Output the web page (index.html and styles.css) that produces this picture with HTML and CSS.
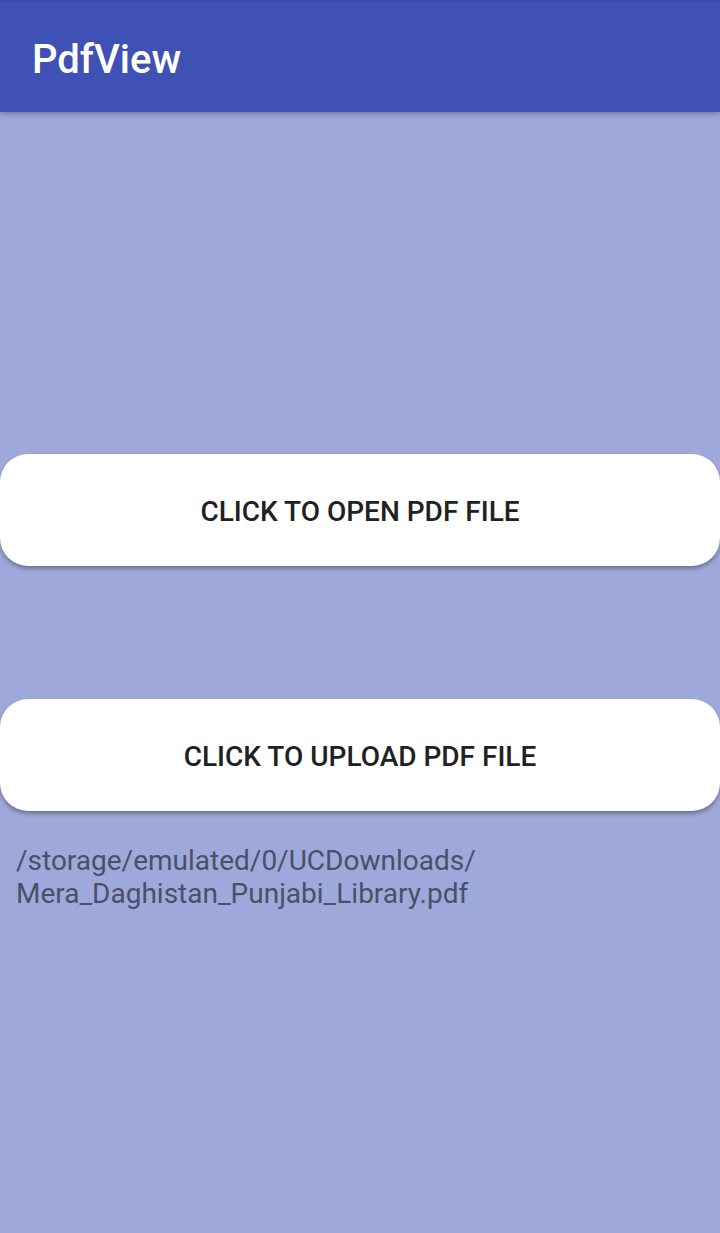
FILE: index.html
```html
<!DOCTYPE html>
<html>
<head>
<meta charset="utf-8">
<link rel="stylesheet" href="styles.css">
</head>
<body>
<div class="app">
  <header class="toolbar"><span class="title">PdfView</span></header>
  <main class="content">
    <button class="btn btn-open">CLICK TO OPEN PDF FILE</button>
    <button class="btn btn-upload">CLICK TO UPLOAD PDF FILE</button>
    <p class="path">/storage/emulated/0/UCDownloads/<br>Mera_Daghistan_Punjabi_Library.pdf</p>
  </main>
</div>
</body>
</html>
```
FILE: styles.css
```css
html, body {
  margin: 0;
  padding: 0;
  height: 100%;
}
body {
  background: #9fa8da;
  font-family: Roboto, "Liberation Sans", sans-serif;
}
.app {
  display: flex;
  flex-direction: column;
  min-height: 1233px;
}
.toolbar {
  height: 112px;
  box-sizing: border-box;
  background: #3f51b5;
  border-top: 2px solid #3949a8;
  display: flex;
  align-items: center;
  padding-left: 32px;
  padding-top: 4px;
  box-shadow: 0 2px 6px rgba(0,0,0,0.3);
  position: relative;
  z-index: 1;
}
.title {
  color: #ffffff;
  font-size: 40px;
  font-weight: 500;
}
.content {
  display: flex;
  flex-direction: column;
  padding-top: 342px;
}
.btn {
  height: 112px;
  width: 720px;
  border: none;
  background: #ffffff;
  border-radius: 28px;
  box-shadow: 0 3px 4px rgba(0,0,0,0.3);
  font-family: Roboto, "Liberation Sans", sans-serif;
  font-size: 28px;
  font-weight: 500;
  color: #212121;
  padding: 2px 0 0 0;
}
.btn-upload {
  margin-top: 133px;
}
.path {
  margin: 33px 0 0 16px;
  font-size: 28px;
  line-height: 33px;
  color: #4a5068;
}
```
